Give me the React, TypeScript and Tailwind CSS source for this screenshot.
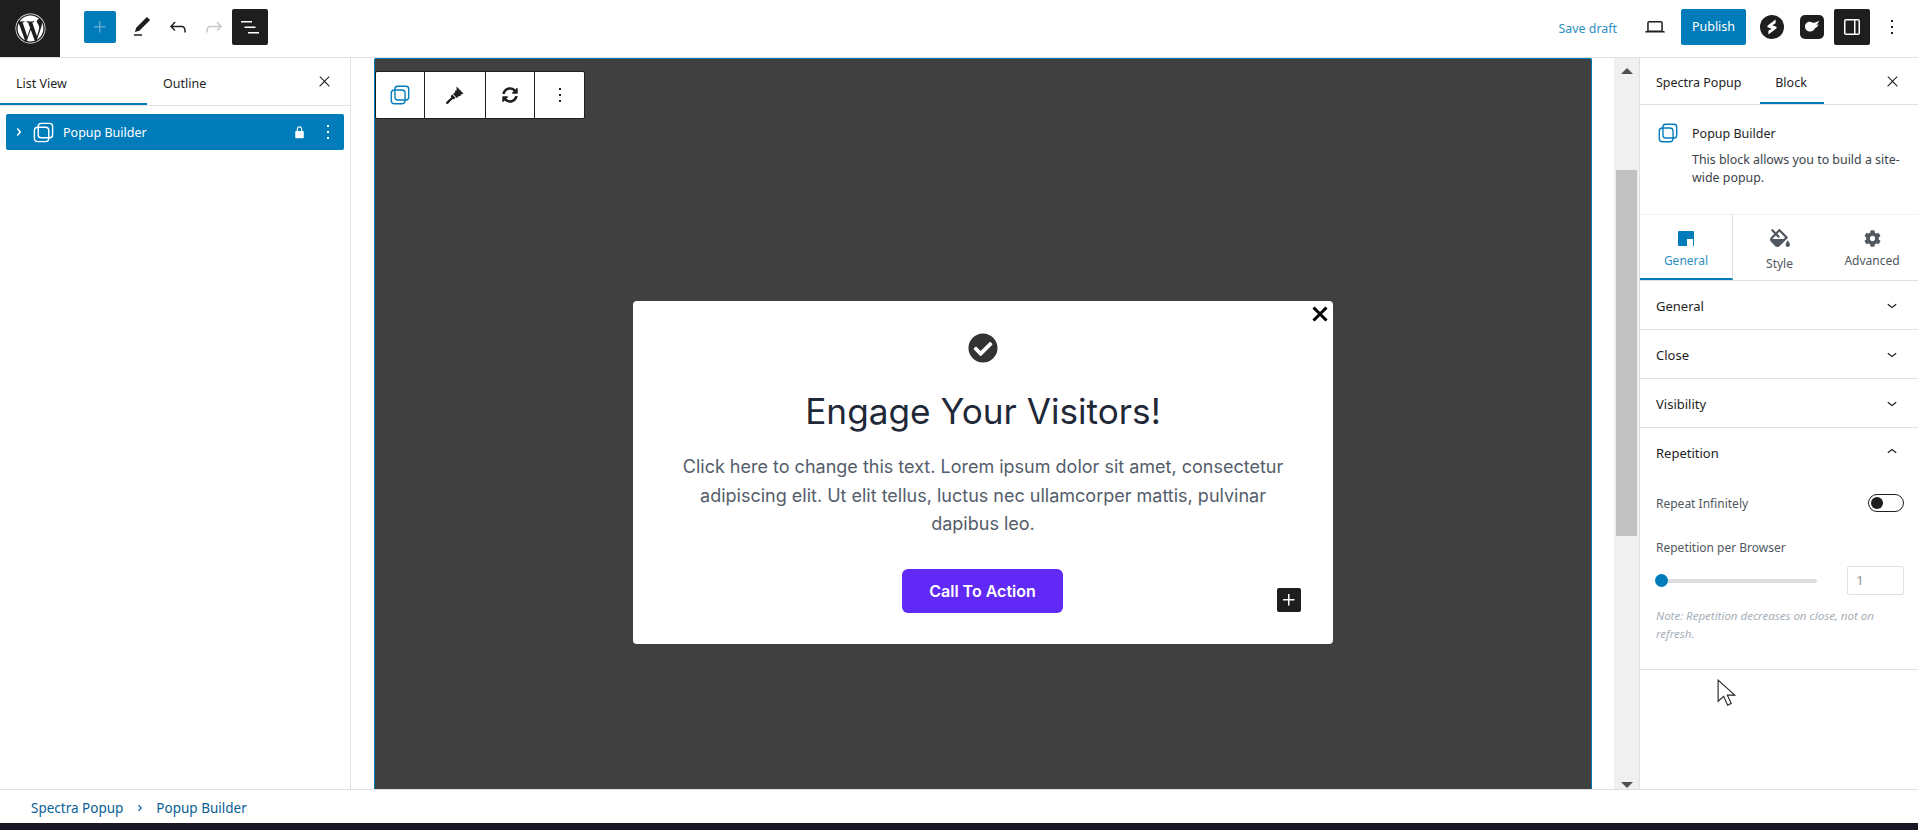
import { FaWordpress, FaCheckCircle, FaCog, FaFillDrip, FaSyncAlt } from "react-icons/fa"

const uiFont = "font-['Noto_Sans',sans-serif]"

function WpIcon({ d, size = 24, className = "" }: { d: string; size?: number; className?: string }) {
  return (
    <svg viewBox="0 0 24 24" width={size} height={size} fill="currentColor" className={className}>
      <path d={d} />
    </svg>
  )
}

const icons = {
  plus: "M11 12.5V17.5H12.5V12.5H17.5V11H12.5V6H11V11H6V12.5H11Z",
  pen: "M20.1 5.1L16.9 2 6.2 12.7l-1.3 4.4 4.5-1.3L20.1 5.1zM4 20.8h8v-1.5H4v1.5z",
  undo: "M18.3 11.7c-.6-.6-1.4-.9-2.3-.9H6.7l2.9-3.3-1.1-1-4.5 5L8.5 16l1-1-2.7-2.7H16c.5 0 .9.2 1.3.5 1 1 1 3.4 1 4.5v.3h1.5v-.2c0-1.5 0-4.3-1.5-5.7z",
  redo: "M15.6 6.5l-1.1 1 2.9 3.3H8c-.9 0-1.7.3-2.3.9-1.4 1.5-1.4 4.2-1.4 5.6v.2h1.5v-.3c0-1.1 0-3.5 1-4.5.3-.3.7-.5 1.3-.5h9.2L14.5 15l1.1 1.1 4.6-4.6-4.6-5z",
  listView: "M3 6h11v1.5H3V6Zm3.5 5.5h11V13h-11v-1.5ZM21 17H10v1.5h11V17Z",
  close: "M13 11.8l6.1-6.3-1-1-6.1 6.2-6.1-6.2-1 1 6.1 6.3-6.5 6.7 1 1 6.5-6.6 6.5 6.6 1-1z",
  more: "M13 19h-2v-2h2v2zm0-6h-2v-2h2v2zm0-6h-2V5h2v2z",
  laptop: "M20.5 16h-.7V8c0-1.1-.9-2-2-2H6.2c-1.1 0-2 .9-2 2v8h-.7c-.8 0-1.5.7-1.5 1.5h20c0-.8-.7-1.5-1.5-1.5zM5.7 8c0-.3.2-.5.5-.5h11.6c.3 0 .5.2.5.5v7.6H5.7V8z",
  sidebar: "M18 4H6c-1.1 0-2 .9-2 2v12c0 1.1.9 2 2 2h12c1.1 0 2-.9 2-2V6c0-1.1-.9-2-2-2zm-4 14.5H6c-.3 0-.5-.2-.5-.5V6c0-.3.2-.5.5-.5h8v13zm4.5-.5c0 .3-.2.5-.5.5h-2.5v-13H18c.3 0 .5.2.5.5v12z",
  lock: "M17 10h-1.2V7c0-2.1-1.7-3.8-3.8-3.8-2.1 0-3.8 1.7-3.8 3.8v3H7c-.6 0-1 .4-1 1v8c0 .6.4 1 1 1h10c.6 0 1-.4 1-1v-8c0-.6-.4-1-1-1zm-2.8 0H9.8V7c0-1.2 1-2.2 2.2-2.2s2.2 1 2.2 2.2v3z",
  down: "M17.5 11.6L12 16l-5.5-4.4.9-1.2L12 14l4.5-3.6 1 1.2z",
  up: "M6.5 12.4L12 8l5.5 4.4-.9 1.2L12 10l-4.5 3.6-1-1.2z",
  chevronSmall: "M10.8622 8.04053L14.2805 12.0286L10.8622 16.0167L9.72327 15.0405L12.3049 12.0286L9.72327 9.01672L10.8622 8.04053Z",
}

function PopupIcon({ size = 24, className = "" }: { size?: number; className?: string }) {
  return (
    <svg viewBox="0 0 24 24" width={size} height={size} fill="none" stroke="currentColor" strokeWidth="1.5" className={className}>
      <rect x="2.5" y="6.5" width="15" height="15" rx="3.5" />
      <rect x="6.5" y="2.5" width="15" height="15" rx="3" />
    </svg>
  )
}

function BrushIcon() {
  return (
    <svg viewBox="0 0 24 24" width={24} height={24} fill="currentColor">
      <path d="M13.6 3.6l6.8 6.8-1.9 1.2-.9-.9.6 1.6-2.4 1.2-1-1 .5 1.6-1.4.8-3.7-3.7.8-1.4 1.6.5-1-1 1.2-2.4 1.6.6-.9-.9z" />
      <path d="M9.2 11.4l3.4 3.4-1.6 1.5-1.4-.4L5.3 20.6c-.6.6-1.4.6-1.9.1s-.5-1.3.1-1.9l4.7-4.3-.4-1.5z" />
    </svg>
  )
}

function SpectraLogo() {
  return (
    <svg viewBox="0 0 24 24" width={24} height={24}>
      <circle cx="12" cy="12" r="12" fill="#1e1e1e" />
      <path d="M15.6 4.6L8 10.2c-1 .8-.9 2 .3 2.4l3.4 1.1-3.3 2.1v3.6l7.6-5.6c1-.8.9-2-.3-2.4l-3.4-1.1 3.3-2.1z" fill="#fff" />
    </svg>
  )
}

function BirdLogo() {
  return (
    <svg viewBox="0 0 24 24" width={24} height={24}>
      <rect width="24" height="24" rx="5" fill="#1e1e1e" />
      <path d="M5 11.5c0-3 2.8-5 5.6-4.6 1.6.2 2.6 1 3.6.9 1.5-.1 3-1 5-2.3-.6 2-1.6 3.4-3 4.3 1 0 1.8-.2 2.6-.6-1 2.2-2.4 3.4-3.8 4-.9 2-2.6 3.3-5 3.3-3 0-5-2.2-5-5z" fill="#fff" />
    </svg>
  )
}

function CursorIcon() {
  return (
    <svg viewBox="0 0 18 27" width={20} height={30} className="absolute left-[1717px] top-[679px]">
      <path d="M1 1v19l5-4.4 3.6 8 3.2-1.5-3.5-7.6H16z" fill="#fff" stroke="#222" strokeWidth="1" />
    </svg>
  )
}

function TopBar() {
  return (
    <header className="flex h-[58px] shrink-0 items-center border-b border-[#e0e0e0] bg-white pb-[3px]">
      <div className="flex h-[57px] w-[60px] items-center justify-center self-start bg-[#1e1e1e] text-white">
        <FaWordpress size={31} />
      </div>
      <button className="ml-[24px] flex h-[32px] w-[32px] items-center justify-center rounded-[2px] bg-[#007cba] text-[#5aa9d6]">
        <WpIcon d={icons.plus} />
      </button>
      <div className="ml-[14px] flex w-[24px] justify-center text-[#1e1e1e]">
        <WpIcon d={icons.pen} />
      </div>
      <div className="ml-[12px] flex w-[24px] justify-center text-[#1e1e1e]">
        <WpIcon d={icons.undo} />
      </div>
      <div className="ml-[12px] flex w-[24px] justify-center text-[#c8c8c8]">
        <WpIcon d={icons.redo} />
      </div>
      <button className="ml-[6px] flex h-[36px] w-[36px] items-center justify-center rounded-[2px] bg-[#1e1e1e] text-white">
        <WpIcon d={icons.listView} />
      </button>

      <div className="ml-auto flex items-center">
        <span className="pt-[4px] text-[12.4px] text-[#2f8fc4]">Save draft</span>
        <div className="ml-[26px] flex w-[24px] justify-center text-[#1e1e1e]">
          <WpIcon d={icons.laptop} />
        </div>
        <button className="ml-[14px] h-[36px] w-[65px] rounded-[2px] bg-[#007cba] text-[12.5px] text-white">Publish</button>
        <div className="ml-[14px] flex">
          <SpectraLogo />
        </div>
        <div className="ml-[16px] flex">
          <BirdLogo />
        </div>
        <button className="ml-[10px] flex h-[36px] w-[36px] items-center justify-center rounded-[2px] bg-[#1e1e1e] text-white">
          <WpIcon d={icons.sidebar} />
        </button>
        <div className="ml-[10px] mr-[14px] flex text-[#1e1e1e]">
          <WpIcon d={icons.more} />
        </div>
      </div>
    </header>
  )
}

function ListPanel() {
  return (
    <aside className="w-[351px] shrink-0 border-r border-[#e0e0e0] bg-white">
      <div className="flex h-[48px] items-center border-b border-[#e0e0e0] text-[12.5px] text-[#1e1e1e]">
        <div className="flex h-[47px] w-[147px] items-center border-b-2 border-[#007cba] pl-[16px] pt-[7px]">List View</div>
        <div className="flex h-[47px] items-center pl-[16px] pt-[5px]">Outline</div>
        <div className="ml-auto mr-[17px] flex">
          <WpIcon d={icons.close} size={17} />
        </div>
      </div>
      <div className="mx-[6px] mt-[8px] flex h-[36px] items-center rounded-[2px] bg-[#007cba] text-[12.5px] text-white">
        <WpIcon d={icons.chevronSmall} size={24} className="ml-[1px] shrink-0" />
        <PopupIcon size={23} className="ml-[1px]" />
        <span className="ml-[8px] pt-[3px]">Popup Builder</span>
        <WpIcon d={icons.lock} size={17} className="ml-auto" />
        <WpIcon d={icons.more} size={24} className="ml-[8px] mr-[4px]" />
      </div>
    </aside>
  )
}

function BlockToolbar() {
  return (
    <div className="absolute left-[0px] top-[12px] flex h-[48px] divide-x divide-[#1e1e1e] rounded-[2px] border border-[#1e1e1e] bg-white text-[#1e1e1e]">
      <div className="flex w-[49px] items-center justify-center text-[#007cba]">
        <PopupIcon size={22} />
      </div>
      <div className="flex w-[61px] items-center justify-center">
        <BrushIcon />
      </div>
      <div className="flex w-[49px] items-center justify-center">
        <FaSyncAlt size={16} />
      </div>
      <div className="flex w-[49px] items-center justify-center">
        <WpIcon d={icons.more} />
      </div>
    </div>
  )
}

function PopupCard() {
  return (
    <div className="relative flex h-[343px] w-[700px] flex-col items-center rounded-[4px] bg-white pt-[32px] font-['Inter',sans-serif]">
      <button className="absolute right-[1px] top-[1px] flex text-black">
        <svg viewBox="0 0 24 24" width={24} height={24} fill="none" stroke="currentColor" strokeWidth="3">
          <path d="M5.5 5.5l13 13M18.5 5.5l-13 13" />
        </svg>
      </button>
      <FaCheckCircle size={30} className="text-[#333333]" />
      <h2 className="mt-[25px] text-[35.2px] leading-[46px] font-normal text-[#1f2937]">Engage Your Visitors!</h2>
      <p className="mt-[19px] w-[610px] text-center text-[18px] leading-[28.5px] text-[#545d6b]">
        Click here to change this text. Lorem ipsum dolor sit amet, consectetur adipiscing elit. Ut elit tellus, luctus nec ullamcorper mattis, pulvinar dapibus leo.
      </p>
      <button className="mr-[1px] mt-[30px] h-[44px] w-[161px] rounded-[6px] bg-[#6129f5] text-[16px] font-semibold text-white">Call To Action</button>
      <button className="absolute bottom-[32px] right-[32px] flex h-[24px] w-[24px] items-center justify-center rounded-[2px] bg-[#1e1e1e] text-white">
        <WpIcon d={icons.plus} />
      </button>
    </div>
  )
}

function Canvas() {
  return (
    <main className="flex min-w-0 flex-1 bg-white pl-[23px]">
      <div className="relative flex w-[1218px] shrink-0 justify-center rounded-t-[2px] border-x border-t border-[#007cba] bg-[#404040] pt-[242px]">
        <BlockToolbar />
        <PopupCard />
      </div>
      <div className="ml-[22px] flex w-[25px] shrink-0 flex-col items-start bg-[#f0f0f0] pl-[2px]">
        <div className="flex h-[112px] w-[21px] items-start justify-center pt-[10px]">
          <div className="h-0 w-0 border-x-[6px] border-b-[6px] border-x-transparent border-b-[#505050]" />
        </div>
        <div className="h-[366px] w-[21px] bg-[#c1c1c1]" />
        <div className="mt-auto flex w-[21px] justify-center pb-[1px]">
          <div className="h-0 w-0 border-x-[6px] border-t-[6px] border-x-transparent border-t-[#505050]" />
        </div>
      </div>
    </main>
  )
}

function AccordionRow({ title, open = false }: { title: string; open?: boolean }) {
  return (
    <div className={`flex h-[49px] items-center justify-between pl-[16px] pr-[14px] text-[13px] text-[#1e1e1e] ${open ? "" : "border-b border-[#e0e0e0]"}`}>
      <span className={open ? "pt-[2px]" : "pt-[4px]"}>{title}</span>
      <WpIcon d={open ? icons.up : icons.down} size={20} className={open ? "mb-[2px] mr-[2px]" : "mr-[2px]"} />
    </div>
  )
}

function SettingsPanel() {
  return (
    <aside className="w-[279px] shrink-0 border-l border-[#e0e0e0] bg-white text-[#1e1e1e]">
      <div className="flex h-[47px] items-center border-b border-[#e0e0e0] text-[12.5px]">
        <div className="flex h-[46px] items-center pl-[16px] pr-[18px] pt-[5px]">Spectra Popup</div>
        <div className="flex h-[46px] w-[64px] items-center justify-center border-b-2 border-[#007cba] pt-[7px] pr-[1px]">Block</div>
        <div className="ml-auto mr-[17px] flex">
          <WpIcon d={icons.close} size={17} />
        </div>
      </div>

      <div className="flex h-[110px] border-b border-[#f0f0f0] pl-[17px] pt-[17px]">
        <PopupIcon size={22} className="shrink-0 text-[#007cba]" />
        <div className="ml-[13px] pt-[2px]">
          <div className="text-[12.5px] leading-[20px]">Popup Builder</div>
          <p className="mt-[7px] whitespace-nowrap text-[12.4px] leading-[18px] text-[#3c434a]">
            This block allows you to build a site-
            <br />
            wide popup.
          </p>
        </div>
      </div>

      <div className="flex h-[66px] border-b border-[#e0e0e0] text-[12px] text-[#50575e]">
        <div className="flex w-[93px] flex-col items-center border-r border-b-2 border-r-[#e0e0e0] border-b-[#007cba] pt-[16px] text-[#2f8fc4]">
          <div className="relative h-[15px] w-[16px] rounded-[1px] bg-[#007cba]">
            <div className="absolute bottom-[0.5px] right-[1px] h-[7px] w-[6px] bg-white" />
          </div>
          <span className="mt-[6px]">General</span>
        </div>
        <div className="flex w-[93px] flex-col items-center pt-[13px]">
          <FaFillDrip size={20} />
          <span className="mt-[7px]">Style</span>
        </div>
        <div className="flex flex-1 flex-col items-center pt-[15px]">
          <FaCog size={17} />
          <span className="mt-[5px]">Advanced</span>
        </div>
      </div>

      <AccordionRow title="General" />
      <AccordionRow title="Close" />
      <AccordionRow title="Visibility" />
      <AccordionRow title="Repetition" open />

      <div className="h-[193px] border-b border-[#e0e0e0] pl-[16px] pr-[14px] pt-[17px] text-[12px] text-[#50575e]">
        <div className="flex h-[18px] items-center justify-between">
          <span className="pt-[1px]">Repeat Infinitely</span>
          <div className="flex h-[18px] w-[36px] items-center rounded-full border border-[#1e1e1e] pl-[2px]">
            <div className="h-[12px] w-[12px] rounded-full bg-[#1e1e1e]" />
          </div>
        </div>
        <div className="mt-[27px] leading-[18px]">Repetition per Browser</div>
        <div className="mt-[9px] flex h-[29px] items-center">
          <div className="relative h-[4px] w-[162px] rounded-full bg-[#dddddd]">
            <div className="absolute -left-[1px] -top-[4.5px] h-[13px] w-[13px] rounded-full bg-[#007cba]" />
          </div>
          <div className="ml-[30px] flex h-[29px] w-[57px] items-center rounded-[2px] border border-[#e0e0e0] pl-[8px] text-[13px] text-[#8c8f94]">1</div>
        </div>
        <p className="mt-[12px] whitespace-nowrap text-[11.5px] leading-[18px] italic text-[#a7b0b8]">
          Note: Repetition decreases on close, not on
          <br />
          refresh.
        </p>
      </div>
    </aside>
  )
}

export default function App() {
  return (
    <div className={`relative flex h-[830px] w-full flex-col overflow-hidden bg-white ${uiFont}`}>
      <TopBar />
      <div className="flex h-[731px] shrink-0 overflow-hidden">
        <ListPanel />
        <Canvas />
        <SettingsPanel />
      </div>
      <footer className="flex h-[34px] shrink-0 items-center border-t border-[#e0e0e0] pl-[31px] pt-[3px] text-[13.5px] text-[#0a5f96]">
        <span>Spectra Popup</span>
        <WpIcon d={icons.chevronSmall} size={20} className="mx-[6.5px]" />
        <span>Popup Builder</span>
      </footer>
      <div className="h-[7px] shrink-0 bg-[#1b1626]" />
      <CursorIcon />
    </div>
  )
}
